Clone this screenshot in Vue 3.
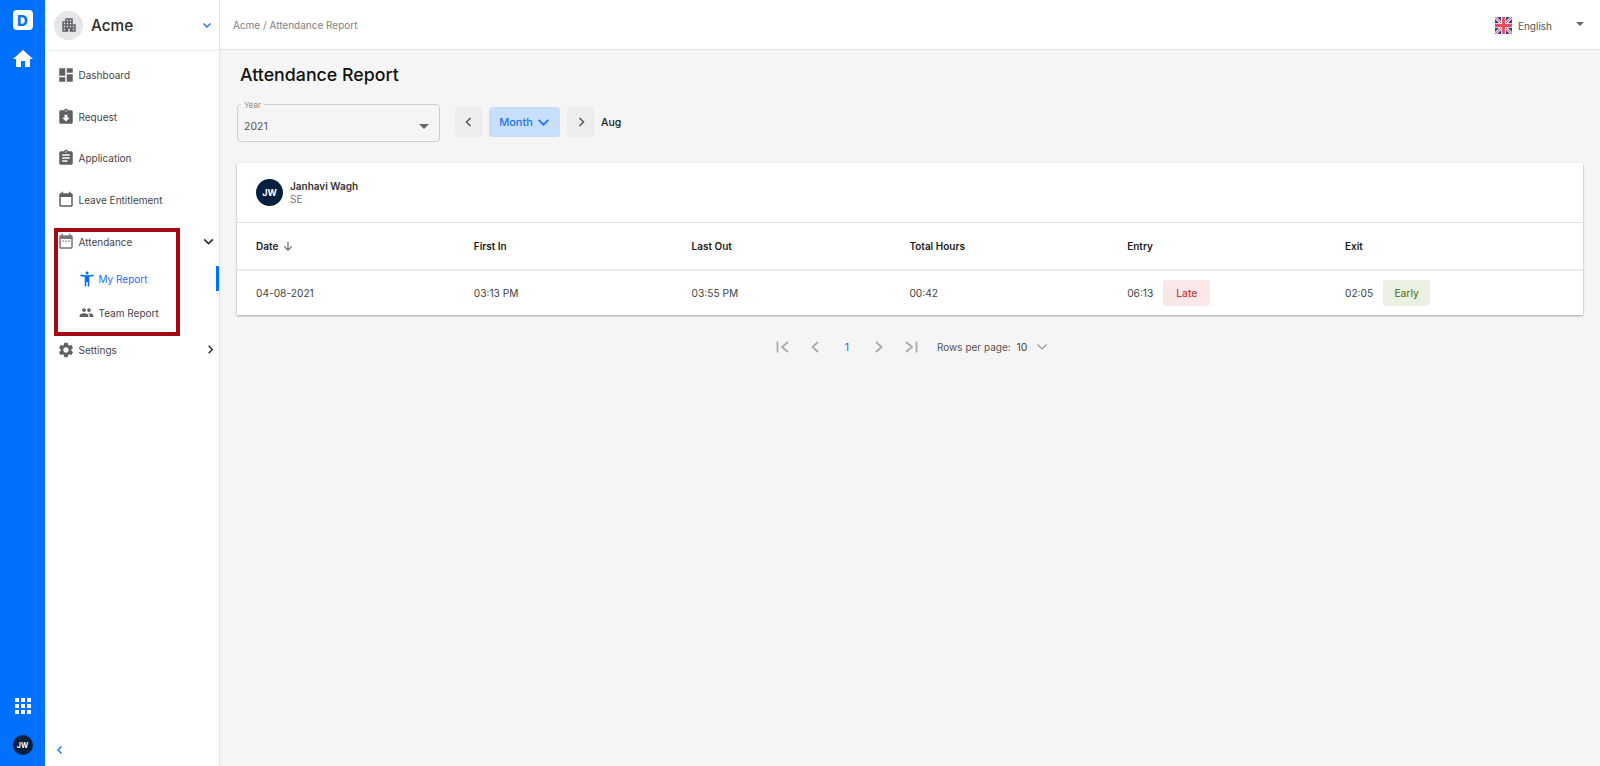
<script setup>
const icons = {
  dashboard: 'M3 13h8V3H3v10zm0 8h8v-6H3v6zm10 0h8V11h-8v10zm0-18v6h8V3h-8z',
  request: 'M19 3h-4.18C14.4 1.84 13.3 1 12 1s-2.4.84-2.82 2H5c-1.1 0-2 .9-2 2v14c0 1.1.9 2 2 2h14c1.1 0 2-.9 2-2V5c0-1.1-.9-2-2-2zm-7 0c.55 0 1 .45 1 1s-.45 1-1 1-1-.45-1-1 .45-1 1-1zm0 15l-5-5h3V9h4v4h3l-5 5z',
  application: 'M19 3h-4.18C14.4 1.84 13.3 1 12 1c-1.3 0-2.4.84-2.82 2H5c-1.1 0-2 .9-2 2v14c0 1.1.9 2 2 2h14c1.1 0 2-.9 2-2V5c0-1.1-.9-2-2-2zm-7 0c.55 0 1 .45 1 1s-.45 1-1 1-1-.45-1-1 .45-1 1-1zm2 14H7v-2h7v2zm3-4H7v-2h10v2zm0-4H7V7h10v2z',
  leave: 'M19 3h-1V1h-2v2H8V1H6v2H5c-1.1 0-2 .9-2 2v14c0 1.1.9 2 2 2h14c1.1 0 2-.9 2-2V5c0-1.1-.9-2-2-2zm0 16H5V8h14v11z',
  attendance: 'M19 3h-1V1h-2v2H8V1H6v2H5c-1.1 0-2 .9-2 2v14c0 1.1.9 2 2 2h14c1.1 0 2-.9 2-2V5c0-1.1-.9-2-2-2zm0 16H5V8h14v11zM7 10h2v1.5H7zm4 0h2v1.5h-2zm4 0h2v1.5h-2z',
  myReport: 'M20.5 6c-2.61.7-5.67 1-8.5 1s-5.89-.3-8.5-1L3 8c1.86.5 4 .83 6 1v13h2v-6h2v6h2V9c2-.17 4.14-.5 6-1l-.5-2zM12 6c1.1 0 2-.9 2-2s-.9-2-2-2-2 .9-2 2 .9 2 2 2z',
  team: 'M16 11c1.66 0 2.99-1.34 2.99-3S17.66 5 16 5c-1.66 0-3 1.34-3 3s1.34 3 3 3zm-8 0c1.66 0 2.99-1.34 2.99-3S9.66 5 8 5C6.34 5 5 6.34 5 8s1.34 3 3 3zm0 2c-2.33 0-7 1.17-7 3.5V19h14v-2.5c0-2.33-4.67-3.5-7-3.5zm8 0c-.29 0-.62.02-.97.05 1.16.84 1.97 1.97 1.97 3.45V19h6v-2.5c0-2.33-4.67-3.5-7-3.5z',
  settings: 'M19.14 12.94c.04-.3.06-.61.06-.94 0-.32-.02-.64-.07-.94l2.03-1.58c.18-.14.23-.41.12-.61l-1.92-3.32c-.12-.22-.37-.29-.59-.22l-2.39.96c-.5-.38-1.03-.7-1.62-.94l-.36-2.54c-.04-.24-.24-.41-.48-.41h-3.84c-.24 0-.43.17-.47.41l-.36 2.54c-.59.24-1.13.57-1.62.94l-2.39-.96c-.22-.08-.47 0-.59.22L2.74 8.87c-.12.21-.08.47.12.61l2.03 1.58c-.05.3-.09.63-.09.94s.02.64.07.94l-2.03 1.58c-.18.14-.23.41-.12.61l1.92 3.32c.12.22.37.29.59.22l2.39-.96c.5.38 1.03.7 1.62.94l.36 2.54c.05.24.24.41.48.41h3.84c.24 0 .44-.17.47-.41l.36-2.54c.59-.24 1.13-.56 1.62-.94l2.39.96c.22.08.47 0 .59-.22l1.92-3.32c.12-.22.07-.47-.12-.61l-2.01-1.58zM12 15.6c-1.98 0-3.6-1.62-3.6-3.6s1.62-3.6 3.6-3.6 3.6 1.62 3.6 3.6-1.62 3.6-3.6 3.6z',
  home: 'M10 20v-6h4v6h5v-8h3L12 3 2 12h3v8z',
  apps: 'M4 8h4V4H4v4zm6 12h4v-4h-4v4zm-6 0h4v-4H4v4zm0-6h4v-4H4v4zm6 0h4v-4h-4v4zm6-10v4h4V4h-4zm-6 4h4V4h-4v4zm6 6h4v-4h-4v4zm0 6h4v-4h-4v4z',
  apartment: 'M17 11V3H7v4H3v14h8v-4h2v4h8V11h-4zM7 19H5v-2h2v2zm0-4H5v-2h2v2zm0-4H5V9h2v2zm4 4H9v-2h2v2zm0-4H9V9h2v2zm0-4H9V5h2v2zm4 8h-2v-2h2v2zm0-4h-2V9h2v2zm0-4h-2V5h2v2zm4 12h-2v-2h2v2zm0-4h-2v-2h2v2z',
}

const topItems = [
  { label: 'Dashboard', icon: icons.dashboard },
  { label: 'Request', icon: icons.request },
  { label: 'Application', icon: icons.application },
  { label: 'Leave Entitlement', icon: icons.leave },
]

const columns = ['Date', 'First In', 'Last Out', 'Total Hours', 'Entry', 'Exit']
</script>

<template>
  <div class="page">
    <aside class="rail">
      <div class="rail-logo">D</div>
      <svg class="rail-home" viewBox="0 0 24 24"><path :d="icons.home" /></svg>
      <svg class="rail-apps" viewBox="0 0 24 24"><path :d="icons.apps" /></svg>
      <div class="rail-avatar">JW</div>
    </aside>

    <aside class="sidebar">
      <div class="org">
        <div class="org-icon">
          <svg viewBox="0 0 24 24"><path :d="icons.apartment" /></svg>
        </div>
        <span class="org-name">Acme</span>
        <svg class="org-chevron" viewBox="0 0 12 12"><path d="M2.5 4.5 6 8l3.5-3.5" /></svg>
      </div>

      <nav class="nav">
        <a v-for="item in topItems" :key="item.label" class="nav-item">
          <svg class="nav-icon" viewBox="0 0 24 24"><path :d="item.icon" /></svg>
          <span>{{ item.label }}</span>
        </a>

        <a class="nav-item">
          <svg class="nav-icon nav-icon--muted" viewBox="0 0 24 24"><path :d="icons.attendance" /></svg>
          <span>Attendance</span>
          <svg class="nav-arrow nav-arrow--open" viewBox="0 0 12 12"><path d="M2 4l4 4 4-4" /></svg>
        </a>
        <a class="sub-item is-active">
          <svg class="nav-icon" viewBox="0 0 24 24"><path :d="icons.myReport" /></svg>
          <span>My Report</span>
        </a>
        <a class="sub-item">
          <svg class="nav-icon nav-icon--team" viewBox="0 0 24 24"><path :d="icons.team" /></svg>
          <span>Team Report</span>
        </a>
        <a class="nav-item nav-item--settings">
          <svg class="nav-icon" viewBox="0 0 24 24"><path :d="icons.settings" /></svg>
          <span>Settings</span>
          <svg class="nav-arrow" viewBox="0 0 12 12"><path d="M4 2l4 4-4 4" /></svg>
        </a>
      </nav>

      <svg class="collapse" viewBox="0 0 12 12"><path d="M7.5 2.5 4 6l3.5 3.5" /></svg>
      <div class="highlight"></div>
    </aside>

    <div class="main">
      <header class="topbar">
        <span class="crumbs">Acme / Attendance Report</span>
        <div class="lang">
          <svg class="flag" viewBox="0 0 18 18">
            <rect width="18" height="18" fill="#2f3f8f" />
            <path d="M0 0l18 18M18 0 0 18" stroke="#fff" stroke-width="3" />
            <path d="M0 0l18 18M18 0 0 18" stroke="#e8505f" stroke-width="1.1" />
            <path d="M9 0v18M0 9h18" stroke="#fff" stroke-width="5" />
            <path d="M9 0v18M0 9h18" stroke="#ee4a5a" stroke-width="3" />
          </svg>
          <span>English</span>
          <i class="caret caret--lang"></i>
        </div>
      </header>

      <main class="content">
        <h1 class="title">Attendance Report</h1>

        <div class="filters">
          <div class="year-field">
            <span class="year-label">Year</span>
            <span class="year-value">2021</span>
            <i class="caret"></i>
          </div>
          <button class="step">
            <svg viewBox="0 0 12 12"><path d="M7.5 2 3.5 6l4 4" /></svg>
          </button>
          <button class="month">
            Month
            <svg viewBox="0 0 12 12"><path d="M1.5 3.500 6 8l4.500-4.500" /></svg>
          </button>
          <button class="step">
            <svg viewBox="0 0 12 12"><path d="M4.5 2l4 4-4 4" /></svg>
          </button>
          <span class="current-month">Aug</span>
        </div>

        <section class="card">
          <div class="person">
            <div class="person-avatar">JW</div>
            <div>
              <div class="person-name">Janhavi Wagh</div>
              <div class="person-role">SE</div>
            </div>
          </div>

          <div class="table-row table-row--head">
            <div v-for="col in columns" :key="col" class="cell">
              {{ col }}
              <svg v-if="col === 'Date'" class="sort" viewBox="0 0 12 12"><path d="M6 1v10M1.500 6.500 6 11l4.500-4.500" /></svg>
            </div>
          </div>

          <div class="table-row table-row--body">
            <div class="cell">04-08-2021</div>
            <div class="cell">03:13 PM</div>
            <div class="cell">03:55 PM</div>
            <div class="cell">00:42</div>
            <div class="cell">06:13 <span class="tag tag--late">Late</span></div>
            <div class="cell">02:05 <span class="tag tag--early">Early</span></div>
          </div>
        </section>

        <div class="pager">
          <svg class="pager-btn" viewBox="0 0 16 16"><path d="M2.500 2.500v11M13 3 7 8l6 5" /></svg>
          <svg class="pager-btn" viewBox="0 0 16 16"><path d="M11 3 5.500 8l5.500 5" /></svg>
          <span class="pager-num">1</span>
          <svg class="pager-btn" viewBox="0 0 16 16"><path d="M5 3l5.500 5L5 13" /></svg>
          <svg class="pager-btn" viewBox="0 0 16 16"><path d="M3 3l6 5-6 5M13.500 2.500v11" /></svg>
          <span class="pager-label">Rows per page:</span>
          <div class="pager-size">
            <span>10</span>
            <svg viewBox="0 0 12 12"><path d="M1.500 3.500 6 8l4.500-4.500" /></svg>
          </div>
        </div>
      </main>
    </div>
  </div>
</template>

<style>
html,
body {
  margin: 0;
  background: #f5f5f5;
}
</style>

<style scoped>
.page {
  display: flex;
  height: 766px;
  overflow: hidden;
  font-family: Inter, "Liberation Sans", sans-serif;
  font-size: 10px;
  color: #444;
  background: #f5f5f5;
}

.rail {
  display: flex;
  flex-direction: column;
  align-items: center;
  flex: 0 0 45px;
  background: #0070ff;
}

.rail-logo {
  display: grid;
  place-items: center;
  width: 20px;
  height: 20px;
  margin-top: 10px;
  border-radius: 4px;
  background: #fff;
  color: #0070ff;
  font-size: 15px;
  font-weight: 800;
  line-height: 1;
}

.rail-home {
  width: 24px;
  height: 24px;
  margin-top: 17px;
  fill: #fff;
}

.rail-apps {
  width: 24px;
  height: 24px;
  margin-top: auto;
  fill: #fff;
}

.rail-avatar {
  display: grid;
  place-items: center;
  width: 20px;
  height: 20px;
  margin: 17px 0 11px;
  border-radius: 50%;
  background: #04203f;
  color: #fff;
  font-size: 7px;
  font-weight: 700;
}

.sidebar {
  position: relative;
  flex: 0 0 174px;
  border-right: 1px solid #e4e4e4;
  background: #fff;
}

.org {
  display: flex;
  align-items: center;
  height: 50px;
  padding-left: 9px;
  border-bottom: 1px solid #ececec;
}

.org-icon {
  display: grid;
  place-items: center;
  width: 29px;
  height: 29px;
  border-radius: 50%;
  background: #e6e6e6;
}

.org-icon svg {
  width: 18px;
  height: 18px;
  fill: #5e6068;
}

.org-name {
  margin-left: 8px;
  font-size: 15.300px;
  font-weight: 500;
  color: #2c2c2c;
}

.org-chevron {
  width: 12px;
  height: 12px;
  margin-left: auto;
  margin-right: 6px;
  fill: none;
  stroke: #1a73ff;
  stroke-width: 1.3;
}

.nav {
  padding-top: 3px;
}

.nav-item {
  display: flex;
  align-items: center;
  gap: 4px;
  height: 41.7px;
  padding-left: 11.500px;
}

.nav-item--settings {
  height: 41px;
}

.nav-icon {
  flex: none;
  width: 18px;
  height: 18px;
  fill: #606060;
}

.nav-icon--muted {
  fill: #777;
}

.nav-icon--team {
  width: 15px;
  height: 15px;
  margin: 0 1.500px;
}

.nav-arrow {
  width: 11px;
  height: 11px;
  margin-left: auto;
  margin-right: 3px;
  fill: none;
  stroke: #2a2a2a;
  stroke-width: 1.5;
}

.nav-arrow--open {
  width: 13px;
  height: 13px;
  margin-right: 4px;
}

.sub-item {
  position: relative;
  display: flex;
  align-items: center;
  gap: 3px;
  height: 33.500px;
  padding-left: 32.500px;
}

.sub-item.is-active {
  color: #1a6dff;
}

.sub-item.is-active .nav-icon {
  fill: #0070ff;
}

.sub-item.is-active::after {
  content: "";
  position: absolute;
  top: 4px;
  right: 0;
  width: 3px;
  height: 25px;
  background: #0070ff;
}

.collapse {
  position: absolute;
  bottom: 10px;
  left: 9px;
  width: 12px;
  height: 12px;
  fill: none;
  stroke: #1a73ff;
  stroke-width: 1.4;
}

.highlight {
  position: absolute;
  top: 228px;
  left: 9px;
  width: 118px;
  height: 100px;
  border: 4px solid #a50a12;
  pointer-events: none;
}

.main {
  display: flex;
  flex: 1;
  flex-direction: column;
  min-width: 0;
}

.topbar {
  display: flex;
  align-items: center;
  justify-content: space-between;
  flex: 0 0 49px;
  padding: 0 16px 0 13px;
  border-bottom: 1px solid #e4e4e4;
  background: #fff;
}

.crumbs {
  font-size: 10px;
  color: #808080;
}

.lang {
  display: flex;
  align-items: center;
  padding-top: 2px;
  font-size: 10px;
  color: #555;
}

.flag {
  width: 17px;
  height: 17px;
  margin-right: 6px;
}

.caret {
  width: 0;
  height: 0;
  border-top: 5px solid #666;
  border-left: 5px solid transparent;
  border-right: 5px solid transparent;
}

.caret--lang {
  margin-left: 24px;
  margin-top: -3px;
  border-top-width: 4.500px;
  border-left-width: 4.500px;
  border-right-width: 4.500px;
}

.content {
  flex: 1;
  padding: 0 17px 0 17px;
}

.title {
  margin: 14px 0 0 3px;
  font-size: 17.800px;
  font-weight: 500;
  line-height: 22px;
  color: #111;
}

.filters {
  display: flex;
  align-items: center;
  gap: 7px;
  margin-top: 18px;
  height: 38px;
}

.year-field {
  position: relative;
  display: flex;
  align-items: center;
  justify-content: space-between;
  box-sizing: border-box;
  width: 203px;
  height: 38px;
  margin-right: 8px;
  padding: 6px 10px 0 6px;
  border: 1px solid #cfcfcf;
  border-radius: 4px;
}

.year-label {
  position: absolute;
  top: -5px;
  left: 3px;
  padding: 0 3px;
  background: #f5f5f5;
  font-size: 8px;
  line-height: 10px;
  color: #8a8a8a;
}

.year-value {
  font-size: 10.500px;
  color: #555;
}

.step {
  display: grid;
  place-items: center;
  width: 27px;
  height: 30px;
  margin-bottom: 2px;
  padding: 0;
  border: 0;
  border-radius: 3px;
  background: #ededed;
}

.step svg {
  width: 12px;
  height: 12px;
  fill: none;
  stroke: #555;
  stroke-width: 1.5;
}

.month {
  display: flex;
  align-items: center;
  justify-content: center;
  gap: 4px;
  width: 71px;
  height: 30px;
  margin-bottom: 2px;
  padding: 0;
  border: 0;
  border-radius: 3px;
  background: #c7dffc;
  font-family: inherit;
  font-size: 11px;
  font-weight: 500;
  color: #1a73ff;
}

.month svg {
  width: 13px;
  height: 13px;
  fill: none;
  stroke: #1a73ff;
  stroke-width: 1.6;
}

.current-month {
  margin-bottom: 2px;
  font-size: 10.500px;
  font-weight: 500;
  color: #222;
}

.card {
  margin-top: 21px;
  background: #fff;
  box-shadow: 0 1px 2px rgba(0, 0, 0, 0.35);
}

.person {
  display: flex;
  align-items: center;
  gap: 7px;
  height: 59px;
  padding-left: 19px;
  border-bottom: 1px solid #e2e2e2;
}

.person-avatar {
  display: grid;
  place-items: center;
  width: 27px;
  height: 27px;
  border-radius: 50%;
  background: #04203f;
  color: #fff;
  font-size: 9px;
  font-weight: 700;
}

.person-name {
  font-size: 10px;
  font-weight: 600;
  line-height: 14px;
  color: #333;
}

.person-role {
  font-size: 10px;
  line-height: 13px;
  color: #777;
}

.table-row {
  display: grid;
  grid-template-columns: repeat(6, 217.800px);
  padding-left: 19px;
}

.table-row--head {
  height: 46px;
  border-bottom: 2px solid #ececec;
  font-weight: 600;
  font-size: 10px;
  color: #1c1c1c;
}

.table-row--body {
  height: 44px;
  font-size: 10.200px;
  color: #444;
}

.cell {
  display: flex;
  align-items: center;
}

.sort {
  width: 10px;
  height: 10px;
  margin-left: 5px;
  fill: none;
  stroke: #666;
  stroke-width: 1.4;
}

.tag {
  display: grid;
  place-items: center;
  width: 47px;
  height: 26px;
  margin-left: 10px;
  border-radius: 3px;
  font-weight: 500;
}

.tag--late {
  background: #fae8e8;
  color: #c6373d;
}

.tag--early {
  background: #eaf0e2;
  color: #5b8020;
}

.pager {
  display: flex;
  align-items: center;
  height: 30px;
  margin-top: 17px;
  padding-left: 538px;
}

.pager-btn {
  width: 16px;
  height: 16px;
  margin-right: 16px;
  fill: none;
  stroke: #aaa;
  stroke-width: 1.8;
}

.pager-num {
  width: 16px;
  margin-right: 16px;
  text-align: center;
  font-size: 10.500px;
  color: #1a6dff;
}

.pager-label {
  margin-left: 2px;
  font-size: 10px;
  color: #555;
}

.pager-size {
  display: flex;
  align-items: center;
  gap: 8px;
  margin-left: 6px;
  font-size: 10.500px;
  color: #444;
}

.pager-size svg {
  width: 12px;
  height: 12px;
  fill: none;
  stroke: #999;
  stroke-width: 1.2;
}
</style>
